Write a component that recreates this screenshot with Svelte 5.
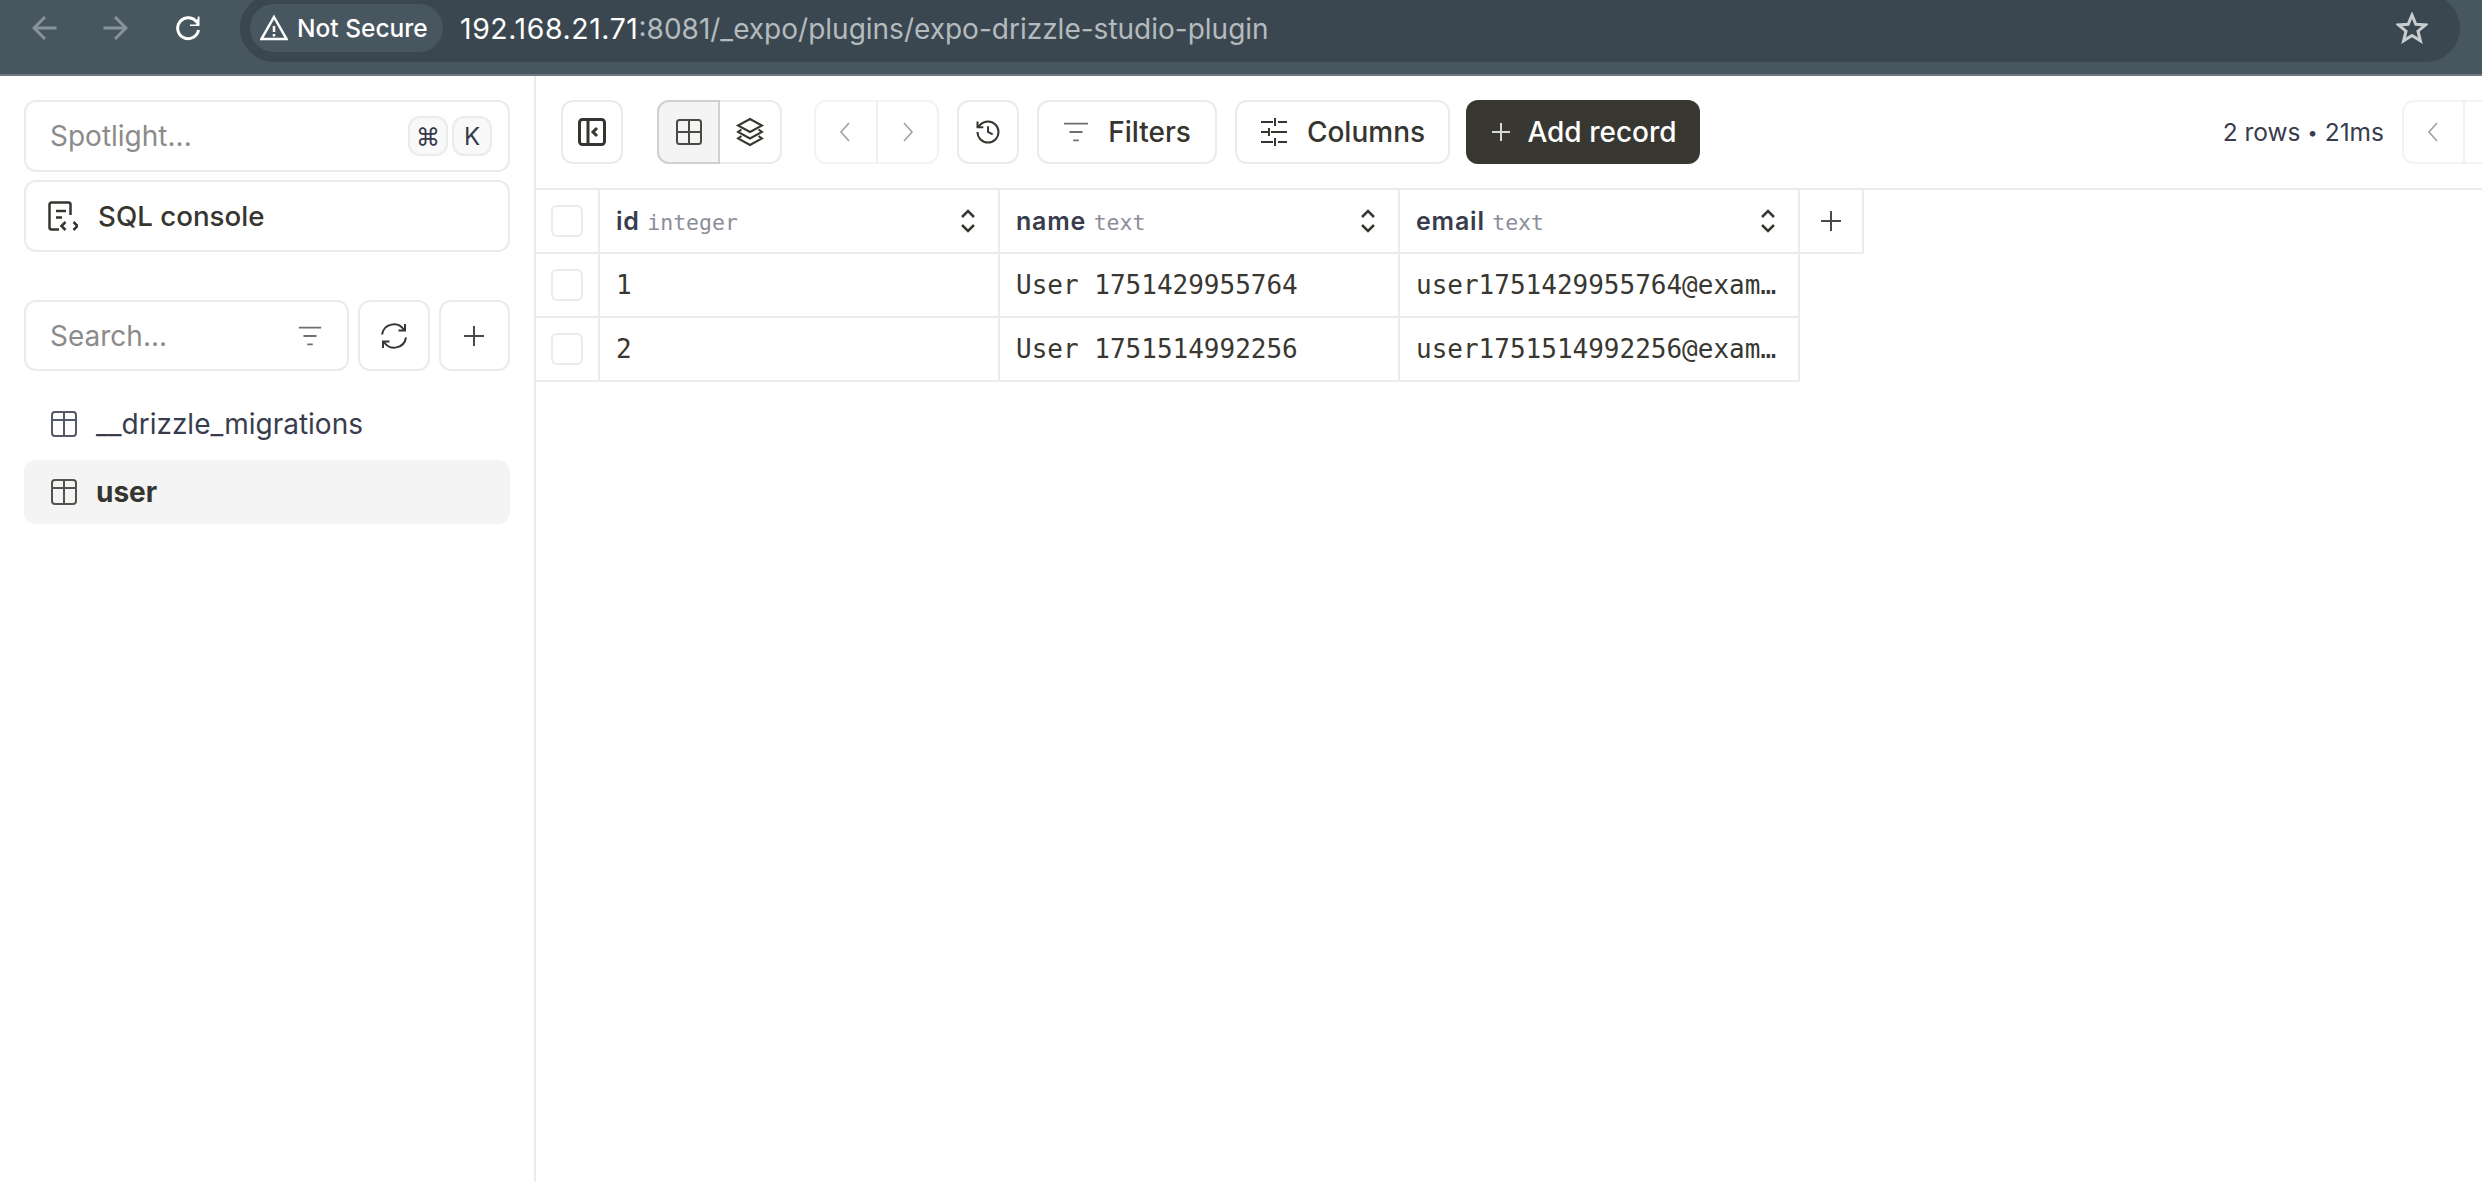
<script>
  const columns = [
    { name: 'id', type: 'integer' },
    { name: 'name', type: 'text' },
    { name: 'email', type: 'text' }
  ];
  const rows = [
    ['1', 'User 1751429955764', 'user1751429955764@example.com'],
    ['2', 'User 1751514992256', 'user1751514992256@example.com']
  ];
  const tables = [
    { name: '__drizzle_migrations', active: false },
    { name: 'user', active: true }
  ];
</script>

<div class="page">
  <header class="chrome">
    <div class="nav-icons">
      <svg class="ic dim" viewBox="0 0 26 26"><path d="M24.500 13H2M13 2 2 13l11 11" /></svg>
      <svg class="ic dim" viewBox="0 0 26 26"><path d="M1.500 13H24M13 2l11 11-11 11" /></svg>
      <svg class="ic reload" viewBox="0 0 26 26"><path d="M22 7.500A10.500 10.500 0 1 0 23.500 15" /><path class="fill" d="M24.500 1.500V11H15v-1.500h6l2-8z" /></svg>
    </div>
    <div class="omnibox">
      <div class="chip">
        <svg class="warn" viewBox="0 0 28 28"><path d="M14 3 26.500 25h-25z" /><path d="M14 12v6M14 20v2.500" /></svg>
        <span>Not Secure</span>
      </div>
      <div class="url"><span class="host">192.168.21.71</span>:8081/_expo/plugins/expo-drizzle-studio-plugin</div>
      <svg class="star" viewBox="0 0 32 32"><path d="m16 3 3.800 9.200 9.700.700-7.500 6.300 2.400 9.600L16 23.500 7.600 28.800 10 19.200 2.500 12.900l9.700-.7z" /></svg>
    </div>
  </header>

  <div class="body">
    <aside class="sidebar">
      <div class="spotlight">
        <input class="field" placeholder="Spotlight..." />
        <kbd>⌘</kbd><kbd>K</kbd>
      </div>
      <button class="sql">
        <svg class="sql-ic" viewBox="0 0 30 30"><path d="M11 28.500H3.500a2 2 0 0 1-2-2v-23a2 2 0 0 1 2-2h17a2 2 0 0 1 2 2V14" /><path d="M8 10h10M8 16.500h6M17.500 21l-4 4 4 4M25.500 21l4 4-4 4" /></svg>
        SQL console
      </button>

      <div class="search-row">
        <div class="search">
          <input class="field" placeholder="Search..." />
          <svg class="ic26 soft" viewBox="0 0 28 28"><path d="M2 5h24M7 14h14M11 23h6" /></svg>
        </div>
        <button class="square">
          <svg class="ic28" viewBox="0 0 28 28"><path d="M2 12.500A12 12 0 0 1 24 8M26 15.500A12 12 0 0 1 4 20" /><path d="M25 2v6.500h-6.500M3 26v-6.500h6.500" /></svg>
        </button>
        <button class="square">
          <svg class="ic28 thin" viewBox="0 0 28 28"><path d="M14 4v20M4 14h20" /></svg>
        </button>
      </div>

      <nav class="tables">
        {#each tables as t}
          <div class="table-row" class:active={t.active}>
            <svg class="table-ic" viewBox="0 0 26 26"><rect x="1" y="1" width="24" height="24" rx="3" /><path d="M1 9h24M13 1v24" /></svg>
            <span>{t.name}</span>
          </div>
        {/each}
      </nav>
    </aside>

    <main class="content">
      <div class="toolbar">
        <button class="btn w62">
          <svg class="ic28 strong" viewBox="0 0 28 28"><rect x="1.500" y="1.500" width="25" height="25" rx="3" /><path d="M10 1.500v25M19 10l-4 4 4 4" /></svg>
        </button>

        <div class="group switch">
          <button class="seg on"><svg class="ic26 grid-ic" viewBox="0 0 26 26"><rect x="1" y="1" width="24" height="24" rx="2.500" /><path d="M1 13h24M13 1v24" /></svg></button>
          <button class="seg"><svg class="ic30" viewBox="0 0 30 30"><path d="m15 2 12 6.500-12 6.500-12-6.500zM6.500 12.500 3 15l12 6.500L27 15l-3.500-2.500M6.500 19 3 21.500 15 28l12-6.500-3.500-2.500" /></svg></button>
        </div>

        <div class="group faint history-nav">
          <button class="seg"><svg class="ic24 chev" viewBox="0 0 24 24"><path d="m15 3-8 9 8 9" /></svg></button>
          <button class="seg"><svg class="ic24 chev" viewBox="0 0 24 24"><path d="m9 3 8 9-8 9" /></svg></button>
        </div>

        <button class="btn w62 ms">
          <svg class="ic28 hist" viewBox="0 0 24 24"><path d="M3 12a9 9 0 1 0 9-9 9.750 9.750 0 0 0-6.740 2.740L3 8" /><path d="M3 3v5h5M12 7v5l4 2" /></svg>
        </button>

        <button class="btn label ms filters">
          <svg class="ic26 soft" viewBox="0 0 28 28"><path d="M1 5h26M7 14h14M11 23h6" /></svg>
          Filters
        </button>
        <button class="btn label ms columns">
          <svg class="ic28" viewBox="0 0 28 28"><path d="M1 4h12M18 4h9M15 0v8M1 14h7M11 14h16M9 10v8M1 24h12M18 24h9M15 20v8" /></svg>
          Columns
        </button>
        <button class="add">
          <svg class="ic24 light" viewBox="0 0 24 24"><path d="M12 3v18M3 12h18" /></svg>
          Add record
        </button>

        <div class="meta">2 rows <i>•</i> 21ms</div>
        <div class="group faint pager">
          <button class="seg"><svg class="ic24 chev" viewBox="0 0 24 24"><path d="m15 3-8 9 8 9" /></svg></button>
          <button class="seg" aria-label="Next page"></button>
        </div>
      </div>

      <div class="grid">
        <div class="tr">
          <div class="cell check"><span class="box"></span></div>
          {#each columns as c}
            <div class="cell data head">
              <span class="title"><b>{c.name}</b> <em>{c.type}</em></span>
              <svg class="sort" viewBox="0 0 16 24"><path d="m2 8 6-6 6 6M2 16l6 6 6-6" /></svg>
            </div>
          {/each}
          <div class="cell plus"><svg class="ic28 thin" viewBox="0 0 28 28"><path d="M14 4v20M4 14h20" /></svg></div>
        </div>
        {#each rows as r}
          <div class="tr">
            <div class="cell check"><span class="box"></span></div>
            {#each r as v}
              <div class="cell data"><span class="val">{v}</span></div>
            {/each}
          </div>
        {/each}
      </div>
    </main>
  </div>
</div>

<style>
  :global(body) { margin: 0; background: #fff; }
  * { box-sizing: border-box; }
  .page { width: 2482px; height: 1182px; overflow: hidden; display: flex; flex-direction: column; font-family: Inter, "Liberation Sans", sans-serif; color: #36352f; }
  svg { fill: none; stroke: currentColor; stroke-width: 2; flex: none; display: block; }
  button { font: inherit; color: inherit; background: none; padding: 0; }

  .chrome { height: 76px; flex: none; background: #47565f; border-bottom: 2px solid #6b7a83; display: flex; padding-left: 32px; overflow: hidden; }
  .nav-icons { display: flex; align-items: center; height: 56px; gap: 44px; width: 208px; flex: none; }
  .ic { width: 26px; height: 26px; color: #87939a; stroke-width: 3; }
  .reload { color: #fff; margin-left: 3px; stroke-width: 3; }
  .reload .fill { fill: #fff; stroke: none; }
  .omnibox { width: 2220px; height: 68px; margin-top: -6px; background: #3b4750; border-radius: 34px; display: flex; align-items: center; padding: 0 32px 0 10px; flex: none; }
  .chip { height: 48px; width: 193px; border-radius: 24px; background: #47565f; display: flex; align-items: center; gap: 9px; padding-left: 10px; color: #fff; font-size: 24.500px; font-weight: 500; flex: none; }
  .warn { width: 28px; height: 28px; stroke-width: 2.500; }
  .url { margin-left: 17px; font-size: 28px; color: #b4bbbf; white-space: nowrap; flex: 1; }
  .host { color: #fff; font-size: 28.400px; letter-spacing: 0.600px; }
  .star { width: 32px; height: 32px; color: #c9cccd; stroke-width: 3; }

  .body { flex: 1; display: flex; min-height: 0; }
  .sidebar { width: 536px; flex: none; border-right: 2px solid #ebebeb; padding: 24px 24px 0 24px; display: flex; flex-direction: column; }
  .spotlight, .sql, .search, .square, .btn { border: 2px solid #ebebeb; border-radius: 12px; background: #fff; }
  .spotlight { height: 72px; display: flex; align-items: center; gap: 4px; padding: 0 16px 0 24px; }
  .field { flex: 1; min-width: 0; border: 0; outline: 0; background: none; padding: 0; font: inherit; font-size: 28px; color: #36352f; }
  .field::placeholder { color: #8b8b8b; opacity: 1; }
  kbd { width: 40px; height: 40px; flex: none; border: 2px solid #ebebeb; border-radius: 12px; background: #f9f9f9; display: flex; align-items: center; justify-content: center; font-family: "Inter", "DejaVu Sans", sans-serif; font-size: 24px; color: #36394a; }
  .sql { margin-top: 8px; height: 72px; display: flex; align-items: center; gap: 20px; padding: 0 0 0 22px; font-size: 27.700px; font-weight: 500; cursor: pointer; text-align: left; width: 100%; }
  .sql-ic { width: 30px; height: 30px; stroke-width: 2.500; }
  .search-row { margin-top: 48px; display: flex; gap: 9px; height: 71px; }
  .search { width: 325px; display: flex; align-items: center; padding: 0 24px 0 24px; }
  .square { width: 72px; display: flex; align-items: center; justify-content: center; }
  .ic24 { width: 24px; height: 24px; }
  .ic26 { width: 26px; height: 26px; }
  .ic28 { width: 28px; height: 28px; }
  .ic30 { width: 30px; height: 30px; }
  .soft { color: #6f6f6b; }
  .strong { stroke-width: 3; }
  .grid-ic { stroke-width: 2; color: #4a4a45; }
  .hist { stroke-width: 1.700; }
  .thin { color: #4a4a4a; }
  .tables { margin-top: 21px; display: flex; flex-direction: column; gap: 4px; }
  .table-row { height: 64px; border-radius: 12px; display: flex; align-items: center; gap: 19px; padding-left: 27px; font-size: 28px; color: #383c4d; }
  .table-ic { width: 26px; height: 26px; color: #55596a; }
  .table-row.active { background: #f4f4f4; color: #36352f; font-weight: 700; }
  .table-row.active .table-ic { color: #55534d; }

  .content { flex: 1; min-width: 0; display: flex; flex-direction: column; }
  .toolbar { height: 114px; flex: none; border-bottom: 2px solid #ebebeb; display: flex; align-items: flex-start; padding: 24px 0 0 25px; }
  .btn { height: 64px; display: flex; align-items: center; justify-content: center; cursor: pointer; flex: none; }
  .w62 { width: 62px; }
  .group { display: flex; height: 64px; border: 2px solid #ebebeb; border-radius: 12px; flex: none; }
  .group .seg { flex: 1; border: 0; display: flex; align-items: center; justify-content: center; background: transparent; }
  .group .seg + .seg { border-left: 2px solid #ebebeb; }
  .group .seg.on + .seg { border-left: 0; }
  .group .seg.on { flex: none; width: 63px; margin: -2px 0 -2px -2px; background: #f4f4f4; border: 2px solid #cfcfd4; border-radius: 12px 0 0 12px; }
  .faint { border-color: #f3f3f3; }
  .faint .seg + .seg { border-left-color: #f0f0f0; }
  .chev { color: #a0a0a0; stroke-width: 1.600; }
  .switch { margin-left: 34px; width: 125px; }
  .history-nav { margin-left: 32px; width: 125px; }
  .ms { margin-left: 18px; }
  .label { gap: 19px; font-size: 28px; font-weight: 500; }
  .filters { width: 180px; }
  .columns { width: 215px; }
  .add { margin-left: 16px; width: 234px; height: 64px; border: 0; border-radius: 12px; background: #393731; color: #fff; display: flex; align-items: center; justify-content: center; gap: 14px; font-size: 28px; font-weight: 500; flex: none; }
  .light { color: #d8d8d6; }
  .meta { margin-left: auto; height: 64px; display: flex; align-items: center; gap: 7px; font-size: 24.500px; color: #383c4d; white-space: nowrap; }
  .meta i { font-style: normal; font-size: 18px; }
  .pager { margin-left: 18px; width: 124px; margin-right: -44px; }

  .grid { display: flex; flex-direction: column; }
  .tr { display: flex; height: 64px; }
  .cell { height: 64px; border-right: 2px solid #ebebeb; border-bottom: 2px solid #ebebeb; display: flex; align-items: center; flex: none; }
  .check { width: 64px; justify-content: center; }
  .box { width: 32px; height: 32px; border: 2px solid #ebebeb; border-radius: 6px; display: block; }
  .data { width: 400px; padding: 0 20px 0 16px; min-width: 0; justify-content: space-between; }
  .head { padding-right: 22px; }
  .title { white-space: nowrap; }
  .title b { font-family: Inter, sans-serif; font-weight: 600; font-size: 25px; letter-spacing: 0.800px; color: #383c4d; }
  .title em { font-family: "DejaVu Sans Mono", monospace; font-style: normal; font-size: 21.500px; color: #8b8d98; margin-left: 3px; }
  .sort { width: 16px; height: 24px; stroke-width: 2.500; color: #393731; }
  .val { font-family: "DejaVu Sans Mono", monospace; font-size: 26px; color: #393731; white-space: nowrap; overflow: hidden; text-overflow: ellipsis; min-width: 0; }
  .plus { width: 64px; justify-content: center; }
</style>
